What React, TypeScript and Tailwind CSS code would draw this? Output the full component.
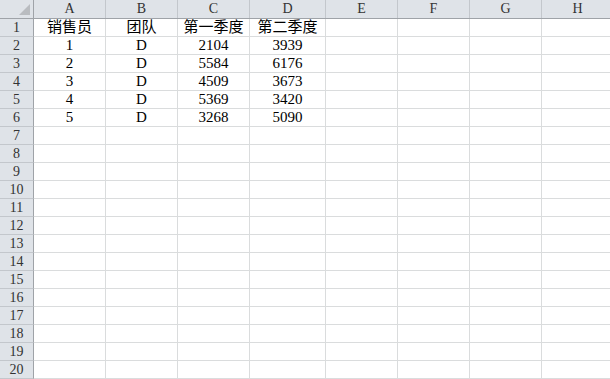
const cols = ["A", "B", "C", "D", "E", "F", "G", "H"];
const widths = ["w-[72px]", "w-[72px]", "w-[72px]", "w-[76px]", "w-[72px]", "w-[72px]", "w-[72px]", "w-[72px]"];

const data: string[][] = [
  ["销售员", "团队", "第一季度", "第二季度"],
  ["1", "D", "2104", "3939"],
  ["2", "D", "5584", "6176"],
  ["3", "D", "4509", "3673"],
  ["4", "D", "5369", "3420"],
  ["5", "D", "3268", "5090"],
];

const font = { fontFamily: '"Liberation Serif", "Noto Sans CJK SC", serif' };

export default function App() {
  const rows = Array.from({ length: 20 }, (_, i) => i + 1);
  return (
    <div className="w-[610px] h-[379px] overflow-hidden bg-white text-[15px] text-black" style={font}>
      {/* column headers */}
      <div className="flex h-[19px] bg-[#dfe3e8] border-b border-[#9fa3a8]">
        <div className="relative w-[34px] shrink-0 border-r border-[#9fa3a8]">
          <div className="absolute right-[3px] bottom-[3px] w-0 h-0 border-l-[11px] border-l-transparent border-b-[11px] border-b-[#b9bcc0]" />
        </div>
        {cols.map((c, i) => (
          <div
            key={c}
            className={`${widths[i]} shrink-0 border-r border-[#c3c7cc] flex items-center justify-center text-[14px] text-[#333] leading-none`}
          >
            {c}
          </div>
        ))}
      </div>

      {rows.map((r) => (
        <div key={r} className="flex h-[18px] border-b border-[#dadcdd]">
          <div className="w-[34px] shrink-0 bg-[#dfe3e8] border-r border-[#9fa3a8] border-b border-b-[#c3c7cc] -mb-px flex items-center justify-center text-[14px] text-[#333] leading-none">
            {r}
          </div>
          {cols.map((c, i) => (
            <div
              key={c}
              className={`${widths[i]} shrink-0 border-r border-[#dadcdd] flex items-center justify-center leading-none whitespace-nowrap`}
            >
              {data[r - 1]?.[i] ?? ""}
            </div>
          ))}
        </div>
      ))}
    </div>
  );
}
